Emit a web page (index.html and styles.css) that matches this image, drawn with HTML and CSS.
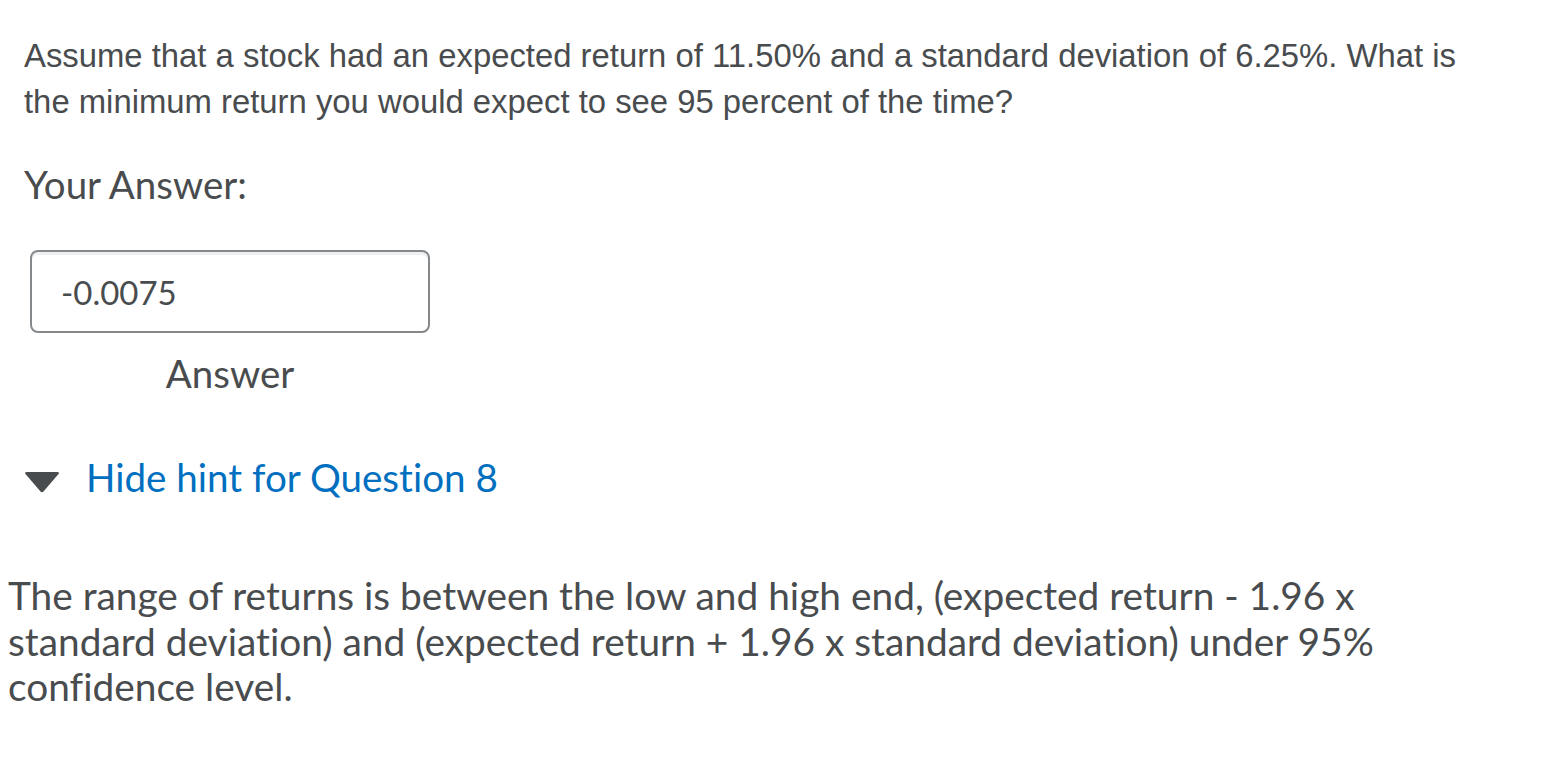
FILE: index.html
```html
<!DOCTYPE html>
<html>
<head>
<meta charset="utf-8">
<link rel="stylesheet" href="styles.css">
</head>
<body>
<div class="page">
  <div class="question">
    <p class="q-text">Assume that a stock had an expected return of 11.50% and a standard deviation of 6.25%. What is the minimum return you would expect to see 95 percent of the time?</p>
    <div class="your-answer">Your Answer:</div>
    <div class="answer-block">
      <div class="answer-input">-0.0075</div>
      <div class="answer-label">Answer</div>
    </div>
    <div class="hint-toggle">
      <svg class="caret" width="36" height="21" viewBox="0 0 36 21"><path d="M1.5 2 Q0 0 3 0 L33 0 Q36 0 34.5 2 L19.5 19.5 Q18 21 16.5 19.5 Z" fill="#494c4e"/></svg>
      <a class="hint-link" href="#">Hide hint for Question 8</a>
    </div>
  </div>
  <p class="hint-text">The range of returns is between the low and high end, (expected return - 1.96 x standard deviation) and (expected return + 1.96 x standard deviation) under 95% confidence level.</p>
</div>
</body>
</html>
```

FILE: styles.css
```css
html, body {
  margin: 0;
  padding: 0;
  background: #fff;
}
.page {
  color: #494c4e;
  font-family: Lato, "Noto Sans", sans-serif;
  font-variant-ligatures: none;
  width: 1556px;
}
.question {
  padding-left: 24px;
}
.q-text {
  margin: 0;
  padding-top: 33px;
  width: 1450px;
  font-family: "Liberation Sans", Arial, sans-serif;
  font-size: 32.85px;
  line-height: 46px;
  color: #494c4e;
}
.your-answer {
  margin-top: 36px;
  font-size: 38.5px;
  line-height: 46px;
}
.answer-block {
  margin-top: 43px;
  margin-left: 6px;
  width: 400px;
  display: flex;
  flex-direction: column;
  align-items: center;
}
.answer-input {
  box-sizing: border-box;
  width: 400px;
  height: 83px;
  border: 2px solid #85898c;
  border-radius: 8px;
  box-shadow: inset 0 3px 0 #eef0f2;
  padding-left: 29px;
  display: flex;
  align-items: center;
  font-size: 33px;
  color: #494c4e;
}
.answer-label {
  margin-top: 17px;
  font-size: 38.5px;
  line-height: 46px;
}
.hint-toggle {
  margin-top: 58px;
  display: flex;
  align-items: center;
  gap: 26px;
}
.caret {
  display: block;
  margin-top: 10px;
}
.hint-link {
  color: #006fbf;
  text-decoration: none;
  font-size: 38.6px;
  line-height: 46px;
}
.hint-text {
  margin: 0;
  padding-left: 8px;
  padding-top: 73px;
  width: 1400px;
  font-size: 38.85px;
  line-height: 45.5px;
}
```
